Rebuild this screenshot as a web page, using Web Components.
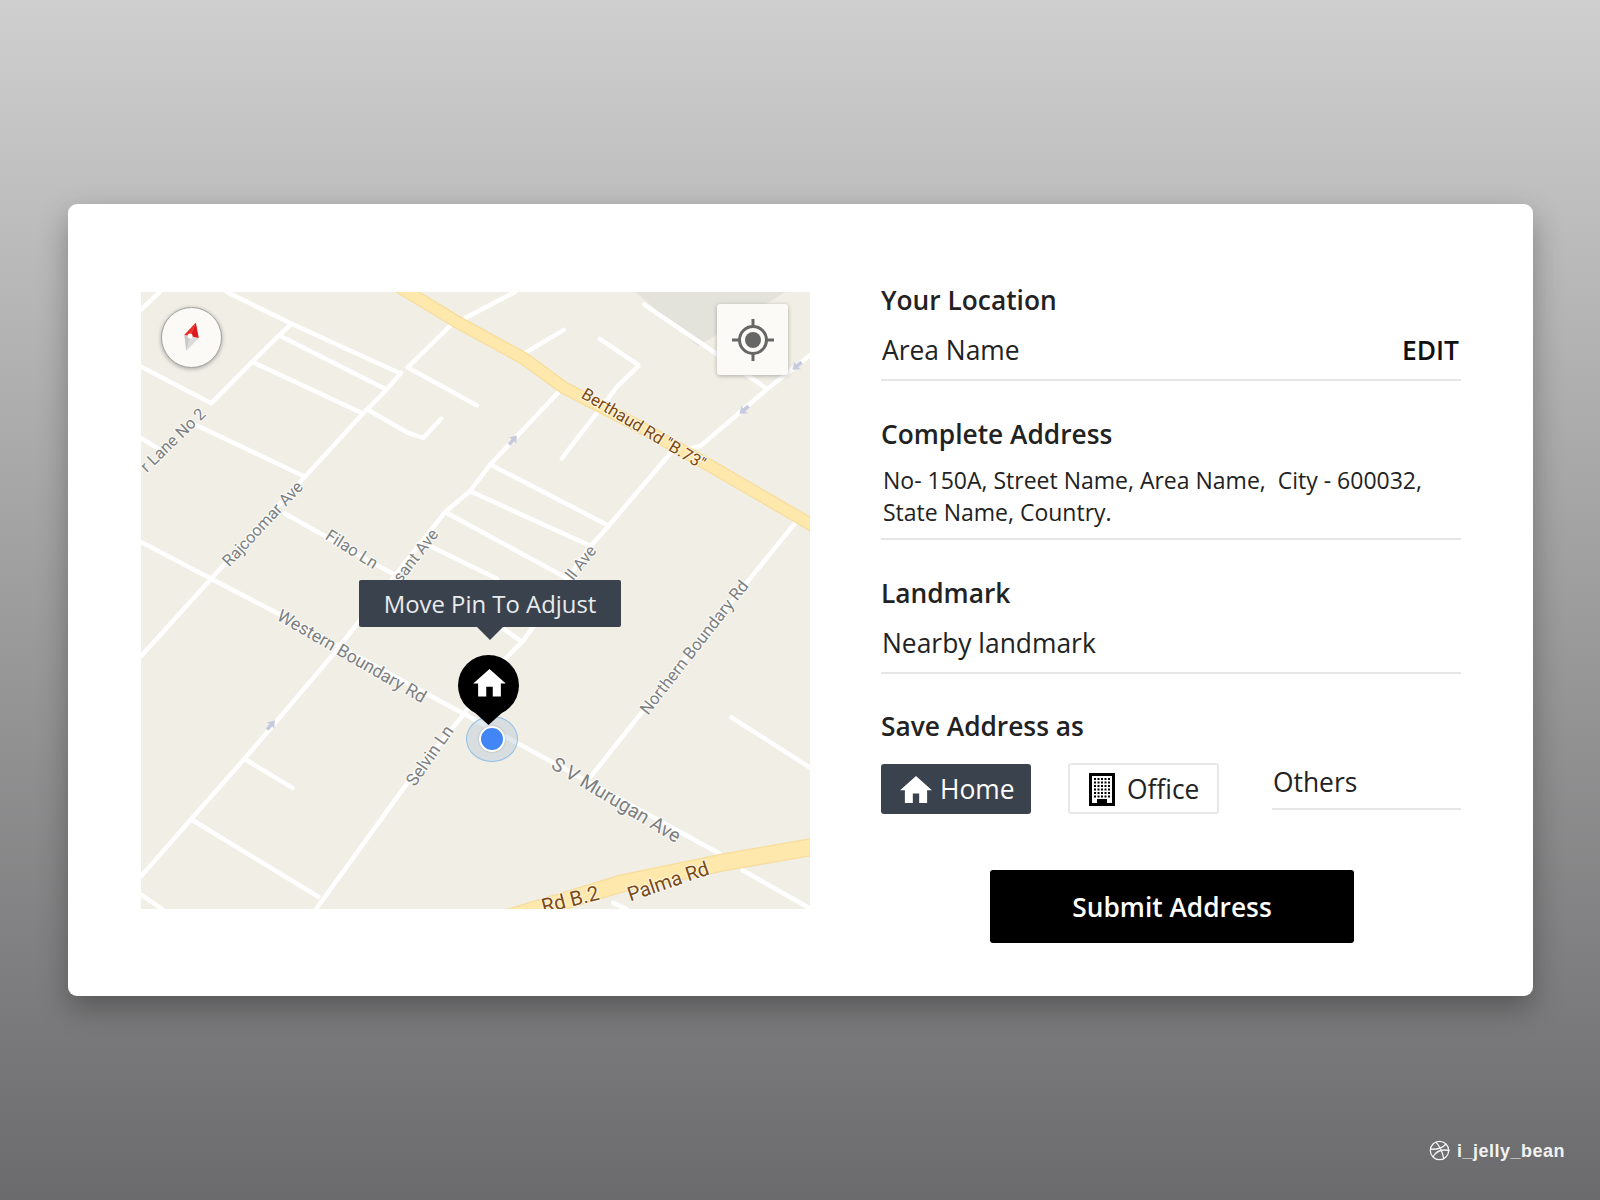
<!DOCTYPE html>
<html lang="en"><head><meta charset="utf-8"><title>Address</title>
<style>
html,body{margin:0;padding:0}
body{width:1600px;height:1200px;overflow:hidden;font-family:"Open Sans","Noto Sans",sans-serif}
</style></head><body>
<x-page>
  <x-card>
    <x-map slot="map">
      <x-compass></x-compass>
      <x-locate></x-locate>
      <x-tooltip>Move Pin To Adjust</x-tooltip>
      <x-halo></x-halo>
      <x-pin></x-pin>
    </x-map>
    <x-form slot="form">
      <x-field label="Your Location" action="EDIT">Area Name</x-field>
      <x-field label="Complete Address" kind="text">No- 150A, Street Name, Area Name,&nbsp; City - 600032,<br>State Name, Country.</x-field>
      <x-field label="Landmark">Nearby landmark</x-field>
      <x-save></x-save>
      <x-submit>Submit Address</x-submit>
    </x-form>
  </x-card>
  <x-credit>i_jelly_bean</x-credit>
</x-page>
<script>
const HOME='<path d="M10 20v-6h4v6h5v-8h3L12 3 2 12h3v8z"/>';
function def(name,css,html,init){
  customElements.define(name,class extends HTMLElement{
    constructor(){super();const r=this.attachShadow({mode:'open'});
      r.innerHTML='<style>'+css+'</style>'+(typeof html==='function'?html(this):html);}
    connectedCallback(){if(init)init(this);}
  });
}
def('x-page',`:host{display:flex;flex-direction:column;width:1600px;height:1200px;box-sizing:border-box;padding:204px 0 0 68px;
  background:linear-gradient(180deg,#cfcfcf 0%,#6b6b6d 100%)}`,'<slot></slot>');
def('x-card',`:host{display:grid;grid-template-columns:669px 580px;column-gap:71px;box-sizing:border-box;width:1465px;height:792px;padding:88px 72px 88px 73px;
  background:#fff;border-radius:9px;box-shadow:0 12px 30px rgba(0,0,0,.3)}`,'<slot name="map"></slot><slot name="form"></slot>');

/* ---- map ---- */
const W=[ // roads in reference crop space
"215,27 360,105 600,225","620,212 715,110","750,90 860,27","23,70 65,27","360,105 335,130 275,195 180,300","23,210 180,300",
"335,135 570,265","275,200 520,325","605,225 570,270 520,325 390,480 180,730 23,920","620,212 775,305",
"530,315 620,372 655,385 695,338","150,355 390,480","23,385 60,410","345,570 590,720","670,650 820,730","830,850 870,880",
"23,640 180,730 320,810 760,1070 1320,1405","1370,1445 1523,1540",
"960,270 805,450 760,515 705,565 450,920 260,1165 135,1320 23,1460","805,450 1070,600","765,518 1030,650","710,570 970,725",
"1210,420 1070,600 1030,650 880,880 840,925 740,1070 620,1230 415,1540","1490,590 1150,1050 1030,1215","1345,1070 1523,1195",
"885,175 970,120","1050,142 1138,207 1090,258 965,435","1150,58 1300,170 1425,265","1523,180 1425,265 1275,405 1210,420",
"135,1320 420,1510","255,1172 362,1243","23,1505 70,1540","1080,1525 1110,1540"];
const roads=W.map(p=>`<polyline points="${p}"/>`).join('');
const arrow=(x,y,a)=>`<path transform="translate(${x} ${y}) rotate(${a})" d="M0-6 5 1 1.8 0 1.8 6-1.800 6-1.800 0-5 1z" fill="#c7cade"/>`;
const label=(t,x,y,a,o={})=>`<text transform="translate(${x} ${y}) rotate(${a})" text-anchor="middle" dominant-baseline="middle" font-size="${o.s||16}" fill="${o.c||'#7d7f80'}">${t}</text>`;
const BERT="590,7 730,100 880,190 970,262 1130,352 1300,455 1540,608", PALMA="850,1560 1100,1477 1330,1425 1540,1385";
const mapSvg=`<svg viewBox="0 0 670 617" width="670" height="617">
<rect width="670" height="617" fill="#f0eee5"/>
<svg viewBox="23 27 1500 1513" width="670" height="617" preserveAspectRatio="none">
 <style>polyline{vector-effect:non-scaling-stroke}</style>
 <polygon points="1130,27 1465,27 1270,160" fill="#e3e3dc"/>
 <g fill="none" stroke="#fff" stroke-width="4.500" stroke-linejoin="bevel" stroke-linecap="round">${roads}</g>
 <g fill="none" stroke-linejoin="round">
  <polyline points="${BERT}" stroke="#f7dd9c" stroke-width="13"/>
  <polyline points="${BERT}" stroke="#ffe8ab" stroke-width="10.500"/>
  <polyline points="${PALMA}" stroke="#f7dd9c" stroke-width="18"/>
  <polyline points="${PALMA}" stroke="#ffe8ab" stroke-width="15.500"/>
 </g>
</svg>
${arrow(372,148,40)}${arrow(130,433,40)}${arrow(656,74,-130)}${arrow(603,118,-130)}
<g transform="scale(1.0204) translate(-138 -285)" font-family="Roboto,'Noto Sans',sans-serif" paint-order="stroke" stroke="rgba(255,255,255,.75)" stroke-width="2">
${label('r Lane No 2',170,431,-44,{s:16})}
${label('Rajcoomar Ave',258,513,-47,{s:16})}
${label('Filao Ln',344,538,32,{s:16.3})}
${label('sant Ave',408,544,-52,{s:16})}
${label('ll Ave',570,551,-52,{s:16})}
${label('Western Boundary Rd',344,643,30,{s:17.3})}
${label('Northern Boundary Rd',681,634,-52,{s:16.4})}
${label('Selvin Ln',422,740,-55,{s:17})}
${label('S V Murugan Ave',603,784,31,{s:19})}
${label('Berthaud Rd "B.73"',630,420,31,{c:'#7b4a14',s:16.5})}
${label('Palma Rd',655,864,-19,{c:'#7b4a14',s:19.500})}
${label('Rd B.2',559,882,-14,{c:'#7b4a14',s:20})}
</g></svg>`;
def('x-map',`:host{display:block;position:relative;width:669px;height:617px;overflow:hidden}svg{display:block}`,mapSvg+'<slot></slot>');
def('x-compass',`:host{position:absolute;left:20px;top:15px;width:61px;height:61px;box-sizing:border-box;border-radius:50%;background:#fbfaf7;border:1.5px solid #a2a2a0;box-shadow:0 1px 4px rgba(0,0,0,.3)}svg{display:block}`,
`<svg viewBox="-30 -30 60 60" width="58" height="58"><path d="M-7-2 -5 14 8 1z" fill="#c9c9c9"/><path d="M-1-1 -5 14 8 1z" fill="#dcdcdc"/><path d="M5-15-7-2-1-1z" fill="#ee2a24"/><path d="M5-15-1-1 8 1z" fill="#d81c1c"/><circle cx="-1" cy="-1" r="2.6" fill="#fff"/></svg>`);
def('x-locate',`:host{position:absolute;left:576px;top:12px;width:71px;height:71px;display:flex;align-items:center;justify-content:center;background:#fbfaf7;border-radius:3px;box-shadow:0 1px 4px rgba(0,0,0,.28)}`,
`<svg viewBox="-22 -22 44 44" width="44" height="44"><circle r="13.5" fill="none" stroke="#666" stroke-width="3"/><circle r="8" fill="#666"/><path d="M0-21V-13M0 13V21M-21 0H-13M13 0H21" stroke="#666" stroke-width="3"/></svg>`);
def('x-tooltip',`:host{position:absolute;left:218px;top:287.500px;width:262px;height:47px;box-sizing:border-box;padding-top:2px;display:flex;align-items:center;justify-content:center;background:#3a424d;border-radius:2px;color:#e9ebed;font:400 23.900px/1 "Open Sans",sans-serif}
:host::after{content:"";position:absolute;left:50%;bottom:-13px;margin-left:-13px;border:13px solid transparent;border-bottom:0;border-top-color:#3a424d}`,'<slot></slot>');
def('x-halo',`:host{position:absolute;left:325px;top:424px;width:52px;height:46px;box-sizing:border-box;border-radius:50%;background:rgba(176,196,214,.38);border:1px solid #8fbde8;display:flex;align-items:center;justify-content:center}
i{display:block;width:26px;height:26px;box-sizing:border-box;border-radius:50%;background:#4285f4;border:2px solid #fff;box-shadow:0 0 2px rgba(0,0,0,.25)}`,'<i></i>');
def('x-pin',`:host{position:absolute;left:317px;top:363px;width:61px;height:70px}svg{display:block}`,
`<svg viewBox="0 0 61 70" width="61" height="70"><circle cx="30.500" cy="30.500" r="30.500"/><path d="M14 55 30.500 70 47 55z"/><svg x="12" y="9" width="39" height="39" viewBox="0 0 24 24" fill="#fff">${HOME}</svg></svg>`);

/* ---- form ---- */
def('x-form',`:host{display:flex;flex-direction:column;margin-top:-10px;color:#1f1f1f}`,'<slot></slot>');
def('x-field',`:host{display:block;margin-bottom:34.500px}
.l{font:600 26.300px/36px "Open Sans",sans-serif;color:#222}
.v{display:flex;justify-content:space-between;margin-top:14px;padding:0 2px 11px 1px;border-bottom:2px solid #e6e6e6;font:400 26.400px/36px "Open Sans",sans-serif;color:#222}
.v b{font-weight:600;color:#111}
.v.t{margin-top:12px;padding:0 2px 10.500px 2px;font-size:23px;line-height:32px}`,
h=>`<div class="l">${h.getAttribute('label')}</div><div class="v ${h.getAttribute('kind')==='text'?'t':''}"><span><slot></slot></span>${h.getAttribute('action')?`<b>${h.getAttribute('action')}</b>`:''}</div>`);
let dots='';for(let r=0;r<6;r++)for(let c=0;c<5;c++)dots+=`<rect x="${5+c*3.5}" y="${5+r*3.5}" width="2" height="2"/>`;
def('x-save',`:host{display:block}
.l{font:600 26.300px/36px "Open Sans",sans-serif;color:#222;margin-bottom:20px}
.r{display:flex;align-items:flex-start;height:50px}
.b{box-sizing:border-box;display:flex;align-items:center;font:400 26.400px/1 "Open Sans",sans-serif;border-radius:3px;height:50px}
.h{width:150px;background:#3a424d;color:#fff;padding-left:19px;gap:8px;margin-top:0}
.h svg{fill:#fff}
.o{margin-left:37px;width:151px;height:51px;margin-top:-1px;padding-top:1px;border:2px solid #e8e8e8;color:#222;padding-left:19px;gap:12px}
.x{margin-left:53px;flex:1;height:46px;box-sizing:border-box;border-bottom:2px solid #e6e6e6;font:400 26.400px/36px "Open Sans",sans-serif;color:#222;padding-left:1px}
svg{display:block}`,
`<div class="l">Save Address as</div><div class="r">
<div class="b h"><svg viewBox="2 3 20 17" width="32" height="27">${HOME}</svg><span>Home</span></div>
<div class="b o"><svg viewBox="0 0 26 33" width="26" height="33"><rect x="1.500" y="1.500" width="23" height="30" fill="#fff" stroke="#000" stroke-width="3"/>${dots}<rect x="8" y="26" width="10" height="6"/></svg><span>Office</span></div>
<div class="x">Others</div></div>`);
def('x-submit',`:host{display:flex;align-items:center;justify-content:center;align-self:center;box-sizing:border-box;padding-top:2px;margin:56px 0 0 2px;width:364px;height:73px;background:#000;color:#fff;border-radius:3px;font:600 26.300px/1 "Open Sans",sans-serif}`,'<slot></slot>');

/* ---- credit ---- */
def('x-credit',`:host{display:flex;align-items:center;gap:7px;align-self:flex-end;margin-top:auto;margin-bottom:39px;margin-right:35px;color:#f2f2f2;font:700 18px/20px "Liberation Sans",sans-serif;letter-spacing:.5px}svg{display:block}`,
`<svg viewBox="0 0 24 24" width="21" height="21" fill="none" stroke="#f2f2f2" stroke-width="1.500"><circle cx="12" cy="12" r="10.500"/><path d="M8 2.500c4 4.500 7.500 11 9 19.500M2 10.500c7 .5 13-1 17.500-6M4.500 19.500c3-6 9-9.500 19-7.500"/></svg><span><slot></slot></span>`);
</script>
</body></html>
